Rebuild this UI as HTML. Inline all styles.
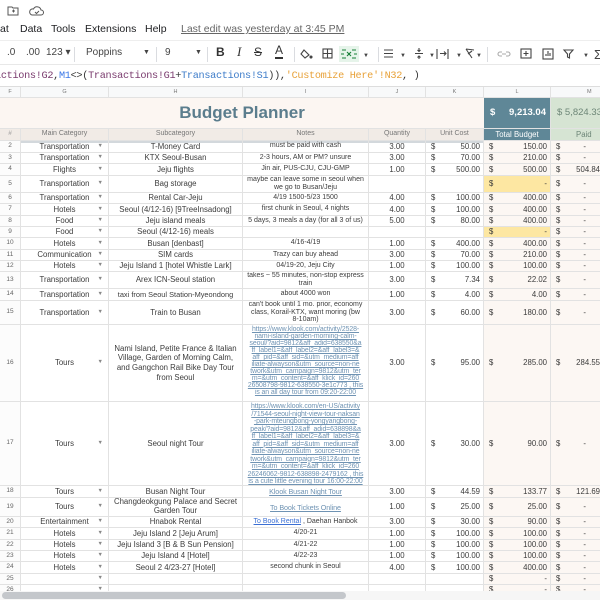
<!DOCTYPE html>
<html><head><meta charset="utf-8">
<style>
*{margin:0;padding:0}
body{width:600px;height:600px;overflow:hidden;position:relative;background:#fff;font-family:"Liberation Sans",sans-serif;color:#3c3c3c}
.abs{position:absolute;white-space:nowrap}
.menu{top:23px;font-size:10.5px;color:#202124}
.tb{top:47px;font-size:10px;color:#444}
.sep{position:absolute;top:47px;width:1px;height:15px;background:#dadce0}
.fx{top:71px;left:-5px;font-family:"Liberation Mono",monospace;font-size:10.2px;letter-spacing:-0.3px}
.r{position:absolute;left:0;width:660px;display:flex}
.c{box-sizing:border-box;border-right:1px solid #e2e2e2;border-bottom:1px solid #e2e2e2;height:100%;display:flex;align-items:center;justify-content:center;text-align:center;font-size:7.8px;color:#3c3c3c;overflow:hidden;position:relative;line-height:1.25;flex:none}
.n{width:21px;color:#666;font-size:6.5px;background:#fcfcfc}
.g{width:88px}.h{width:134px}.i{width:126px;font-size:7px}.j{width:57px}.k{width:58px}.l{width:67px;background:#fcf7f3}.m{width:90px;background:#fcf7f3}
.mo{justify-content:space-between;padding:0 3px 0 5px}
.m.mo{padding-right:54px}
.dd{position:absolute;right:5px;top:50%;margin-top:-4px;font-size:5.5px;color:#888}
.y{background:#fde7a2!important}
.lk{color:#6f93b3;text-decoration:underline;font-size:6.9px;line-height:7px;display:block;letter-spacing:-0.1px}
.hd .c{background:#f8f9fa;color:#777;font-size:5.5px}
</style></head><body>

<svg class="abs" style="left:6px;top:4px" width="40" height="14" viewBox="0 0 40 14">
<path d="M2 3h4l1 1h5v7H2z" fill="none" stroke="#555" stroke-width="1"/>
<path d="M6 7h3M7.5 5.5v3" stroke="#555" stroke-width="1"/>
<path d="M26 11h9a2.5 2.5 0 0 0 0-5 4 4 0 0 0-7.5-1A3 3 0 0 0 26 11z" fill="none" stroke="#555" stroke-width="1"/>
<path d="M29 8l1.5 1.5L33 7" fill="none" stroke="#555" stroke-width="1"/>
</svg>
<div class="abs menu" style="left:0">at</div>
<div class="abs menu" style="left:20px">Data</div>
<div class="abs menu" style="left:51px">Tools</div>
<div class="abs menu" style="left:85px">Extensions</div>
<div class="abs menu" style="left:145px">Help</div>
<div class="abs menu" style="left:181px;color:#666;text-decoration:underline">Last edit was yesterday at 3:45 PM</div>
<div class="abs" style="left:0;top:40px;width:600px;height:1px;background:#eee"></div>

<div class="abs tb" style="left:7px">.0</div>
<div class="abs tb" style="left:26px">.00</div>
<div class="abs tb" style="left:46px">123 ▾</div>
<div class="sep" style="left:74px"></div>
<div class="abs tb" style="left:86px">Poppins</div>
<div class="abs tb" style="left:143px;font-size:7px;top:49px">▼</div>
<div class="sep" style="left:156px"></div>
<div class="abs tb" style="left:165px">9</div>
<div class="abs tb" style="left:195px;font-size:7px;top:49px">▼</div>
<div class="sep" style="left:207px"></div>
<div class="abs tb" style="left:216px;font-weight:bold;font-size:12px;top:45px;color:#333">B</div>
<div class="abs tb" style="left:237px;font-style:italic;font-family:'Liberation Serif',serif;font-size:13px;top:44px;color:#333">I</div>
<div class="abs tb" style="left:254px;text-decoration:line-through;font-size:12px;top:45px;color:#333">S</div>
<div class="abs tb" style="left:275px;font-size:12px;top:44px;color:#333;border-bottom:2px solid #333;line-height:13px">A</div>
<div class="sep" style="left:294px"></div>
<svg class="abs" style="left:300px;top:46px" width="300" height="16" viewBox="0 0 300 16">
<g fill="none" stroke="#444" stroke-width="1.1">
<path d="M4 4l5 5-4 3-4-4z"/><circle cx="11" cy="11" r="1" fill="#444"/>
<rect x="23" y="3" width="9" height="9"/><path d="M27.5 3v9M23 7.5h9"/>
</g>
<rect x="39" y="0" width="20" height="16" fill="#e6f4ea"/>
<g fill="none" stroke="#188038" stroke-width="1.1"><path d="M42 4h4M52 4h4M42 12h4M52 12h4M44 8h-3M54 8h3M47 6l2 2-2 2M51 6l-2 2 2 2"/></g>
<text x="63" y="11" font-size="6" fill="#444">▼</text>
<g fill="none" stroke="#444" stroke-width="1.1">
<path d="M84 4h9M84 7.5h9M84 11h9"/>
<path d="M115 7.5h8M119 2v3M117.5 4l1.5 1.5 1.5-1.5M119 13v-3M117.5 11.5l1.5-1.5 1.5 1.5"/>
<path d="M137 3v10M140 7.5h6M144 5.5l2 2-2 2M148 3v10"/>
<path d="M166 3l6 9M166 3l8 1M168 8l4-3"/>
<path d="M202 6h-2a2 2 0 0 0 0 4h2M206 6h2a2 2 0 0 1 0 4h-2M202 8h4" stroke="#aaa"/>
<rect x="221" y="3" width="10" height="9"/><path d="M226 5v5M223.5 7.5h5"/>
<rect x="243" y="3" width="10" height="10"/><path d="M246 10v-2M248 10v-5M250 10v-3"/>
<path d="M264 4h9l-3.5 4v4l-2-1v-3z"/>
</g>
<text x="100" y="11" font-size="6" fill="#444">▼</text>
<text x="129" y="11" font-size="6" fill="#444">▼</text>
<text x="156" y="11" font-size="6" fill="#444">▼</text>
<text x="176" y="11" font-size="6" fill="#444">▼</text>
<text x="283" y="11" font-size="6" fill="#444">▼</text>
<text x="294" y="13" font-size="13" fill="#444">Σ</text>
</svg>
<div class="sep" style="left:378px"></div>
<div class="sep" style="left:487px"></div>
<div class="abs" style="left:0;top:64px;width:600px;height:1px;background:#e8e8e8"></div>

<div class="abs fx"><span style="color:#7a3b6e">actions!G2</span><span style="color:#333">,</span><span style="color:#3b78e7">M1</span><span style="color:#333">&lt;&gt;(</span><span style="color:#7a3b6e">Transactions!G1</span><span style="color:#333">+</span><span style="color:#3d7cc9">Transactions!S1</span><span style="color:#333">)),</span><span style="color:#e8a23a">'Customize Here'!N32</span><span style="color:#333">, )</span></div>
<div class="abs" style="left:0;top:86px;width:600px;height:1px;background:#ddd"></div>

<div class="r hd" style="top:87px;height:11px">
<div class="c n" style="background:#f8f9fa">F</div><div class="c g">G</div><div class="c h">H</div><div class="c i" style="font-size:5.5px">I</div><div class="c j">J</div><div class="c k">K</div><div class="c l" style="background:#f8f9fa">L</div><div class="c m" style="background:#f8f9fa;justify-content:flex-start;padding-left:36px">M</div>
</div>

<div class="r" style="top:98px;height:31px">
<div class="c" style="width:484px;background:#fcf6f2;font-size:17px;font-weight:bold;color:#5b7d8d;border-right:none">Budget Planner</div>
<div class="c mo" style="width:67px;background:#5f8797;color:#fff;font-size:9.5px;font-weight:bold;padding:0 4px 0 6px">$<span>9,213.04</span></div>
<div class="c" style="width:90px;background:#d6e4d3;color:#6d8677;font-size:9.5px;justify-content:flex-start;padding-left:6px">$ 5,824.33</div>
</div>
<div class="r" style="top:129px;height:12px;border-bottom:2px solid #d3d8dc">
<div class="c n" style="background:#f1ebe6;color:#999">#</div>
<div class="c g" style="background:#f1ebe6;color:#777;font-size:7px">Main Category</div>
<div class="c h" style="background:#f1ebe6;color:#777;font-size:7px">Subcategory</div>
<div class="c i" style="background:#f1ebe6;color:#777;font-size:7px">Notes</div>
<div class="c j" style="background:#f1ebe6;color:#777;font-size:7px">Quantity</div>
<div class="c k" style="background:#f1ebe6;color:#777;font-size:7px">Unit Cost</div>
<div class="c l" style="background:#5f8797;color:#fff;font-size:7.8px">Total Budget</div>
<div class="c m" style="background:#d6e4d3;color:#6d8677;font-size:7.8px;justify-content:flex-start;padding-left:25px">Paid</div>
</div>

<div id="rows">
<div class="r" style="top:141px;height:12px"><div class="c n">2</div><div class="c g">Transportation<span class="dd">▼</span></div><div class="c h">T-Money Card</div><div class="c i">must be paid with cash</div><div class="c j">3.00</div><div class="c k mo">$<span>50.00</span></div><div class="c l mo">$<span>150.00</span></div><div class="c m mo">$<span>-</span></div></div>
<div class="r" style="top:153px;height:11px"><div class="c n">3</div><div class="c g">Transportation<span class="dd">▼</span></div><div class="c h">KTX Seoul-Busan</div><div class="c i">2-3 hours, AM or PM? unsure</div><div class="c j">3.00</div><div class="c k mo">$<span>70.00</span></div><div class="c l mo">$<span>210.00</span></div><div class="c m mo">$<span>-</span></div></div>
<div class="r" style="top:164px;height:12px"><div class="c n">4</div><div class="c g">Flights<span class="dd">▼</span></div><div class="c h">Jeju flights</div><div class="c i">Jin air, PUS-CJU, CJU-GMP</div><div class="c j">1.00</div><div class="c k mo">$<span>500.00</span></div><div class="c l mo">$<span>500.00</span></div><div class="c m mo" style="padding-right:40px">$<span>504.84</span></div></div>
<div class="r" style="top:176px;height:17px"><div class="c n">5</div><div class="c g">Transportation<span class="dd">▼</span></div><div class="c h">Bag storage</div><div class="c i" style="line-height:1.1">maybe can leave some in seoul when<br>we go to Busan/Jeju</div><div class="c j"></div><div class="c k"></div><div class="c l mo y">$<span>-</span></div><div class="c m mo">$<span>-</span></div></div>
<div class="r" style="top:193px;height:11px"><div class="c n">6</div><div class="c g">Transportation<span class="dd">▼</span></div><div class="c h">Rental Car-Jeju</div><div class="c i">4/19 1500-5/23 1500</div><div class="c j">4.00</div><div class="c k mo">$<span>100.00</span></div><div class="c l mo">$<span>400.00</span></div><div class="c m mo">$<span>-</span></div></div>
<div class="r" style="top:204px;height:12px"><div class="c n">7</div><div class="c g">Hotels<span class="dd">▼</span></div><div class="c h">Seoul (4/12-16) [9TreeInsadong]</div><div class="c i">first chunk in Seoul, 4 nights</div><div class="c j">4.00</div><div class="c k mo">$<span>100.00</span></div><div class="c l mo">$<span>400.00</span></div><div class="c m mo">$<span>-</span></div></div>
<div class="r" style="top:216px;height:11px"><div class="c n">8</div><div class="c g">Food<span class="dd">▼</span></div><div class="c h">Jeju island meals</div><div class="c i">5 days, 3 meals a day (for all 3 of us)</div><div class="c j">5.00</div><div class="c k mo">$<span>80.00</span></div><div class="c l mo">$<span>400.00</span></div><div class="c m mo">$<span>-</span></div></div>
<div class="r" style="top:227px;height:11px"><div class="c n">9</div><div class="c g">Food<span class="dd">▼</span></div><div class="c h">Seoul (4/12-16) meals</div><div class="c i"></div><div class="c j"></div><div class="c k"></div><div class="c l mo y">$<span>-</span></div><div class="c m mo">$<span>-</span></div></div>
<div class="r" style="top:238px;height:12px"><div class="c n">10</div><div class="c g">Hotels<span class="dd">▼</span></div><div class="c h">Busan [denbast]</div><div class="c i">4/16-4/19</div><div class="c j">1.00</div><div class="c k mo">$<span>400.00</span></div><div class="c l mo">$<span>400.00</span></div><div class="c m mo">$<span>-</span></div></div>
<div class="r" style="top:250px;height:11px"><div class="c n">11</div><div class="c g">Communication<span class="dd">▼</span></div><div class="c h">SIM cards</div><div class="c i">Trazy can buy ahead</div><div class="c j">3.00</div><div class="c k mo">$<span>70.00</span></div><div class="c l mo">$<span>210.00</span></div><div class="c m mo">$<span>-</span></div></div>
<div class="r" style="top:261px;height:11px"><div class="c n">12</div><div class="c g">Hotels<span class="dd">▼</span></div><div class="c h">Jeju Island 1 [hotel Whistle Lark]</div><div class="c i">04/19-20, Jeju City</div><div class="c j">1.00</div><div class="c k mo">$<span>100.00</span></div><div class="c l mo">$<span>100.00</span></div><div class="c m mo">$<span>-</span></div></div>
<div class="r" style="top:272px;height:17px"><div class="c n">13</div><div class="c g">Transportation<span class="dd">▼</span></div><div class="c h">Arex ICN-Seoul station</div><div class="c i" style="line-height:1.1">takes ~ 55 minutes, non-stop express<br>train</div><div class="c j">3.00</div><div class="c k mo">$<span>7.34</span></div><div class="c l mo">$<span>22.02</span></div><div class="c m mo">$<span>-</span></div></div>
<div class="r" style="top:289px;height:12px"><div class="c n">14</div><div class="c g">Transportation<span class="dd">▼</span></div><div class="c h" style="font-size:7.4px">taxi from Seoul Station-Myeondong</div><div class="c i">about 4000 won</div><div class="c j">1.00</div><div class="c k mo">$<span>4.00</span></div><div class="c l mo">$<span>4.00</span></div><div class="c m mo">$<span>-</span></div></div>
<div class="r" style="top:301px;height:24px"><div class="c n">15</div><div class="c g">Transportation<span class="dd">▼</span></div><div class="c h">Train to Busan</div><div class="c i" style="line-height:1.1">can't book until 1 mo. prior, economy<br>class, Korail-KTX, want moring (bw<br>8-10am)</div><div class="c j">3.00</div><div class="c k mo">$<span>60.00</span></div><div class="c l mo">$<span>180.00</span></div><div class="c m mo">$<span>-</span></div></div>
<div class="r" style="top:325px;height:77px"><div class="c n">16</div><div class="c g">Tours<span class="dd">▼</span></div><div class="c h">Nami Island, Petite France &amp; Italian<br>Village, Garden of Morning Calm,<br>and Gangchon Rail Bike Day Tour<br>from Seoul</div><div class="c i" style="display:block;padding-top:1px"><span class="lk">https://www.klook.com/activity/2528-<br>nami-island-garden-morning-calm-<br>seoul/?aid=9812&amp;aff_adid=638550&amp;a<br>ff_label1=&amp;aff_label2=&amp;aff_label3=&amp;<br>aff_pid=&amp;aff_sid=&amp;utm_medium=aff<br>iliate-alwayson&amp;utm_source=non-ne<br>twork&amp;utm_campaign=9812&amp;utm_ter<br>m=&amp;utm_content=&amp;aff_klick_id=260<br>26508798-9812-638550-3e1c773 , this<br>is an all day tour from 09:20-22:00</span></div><div class="c j">3.00</div><div class="c k mo">$<span>95.00</span></div><div class="c l mo">$<span>285.00</span></div><div class="c m mo" style="padding-right:40px">$<span>284.55</span></div></div>
<div class="r" style="top:402px;height:84px"><div class="c n">17</div><div class="c g">Tours<span class="dd">▼</span></div><div class="c h">Seoul night Tour</div><div class="c i" style="display:block;padding-top:1px"><span class="lk" style="line-height:7.5px">https://www.klook.com/en-US/activity<br>/71544-seoul-night-view-tour-naksan<br>-park-mteungbong-yongyangbong-<br>peak/?aid=9812&amp;aff_adid=638898&amp;a<br>ff_label1=&amp;aff_label2=&amp;aff_label3=&amp;<br>aff_pid=&amp;aff_sid=&amp;utm_medium=aff<br>iliate-alwayson&amp;utm_source=non-ne<br>twork&amp;utm_campaign=9812&amp;utm_ter<br>m=&amp;utm_content=&amp;aff_klick_id=260<br>26246062-9812-638898-2479162 , this<br>is a cute little evening tour 16:00-22:00</span></div><div class="c j">3.00</div><div class="c k mo">$<span>30.00</span></div><div class="c l mo">$<span>90.00</span></div><div class="c m mo">$<span>-</span></div></div>
<div class="r" style="top:486px;height:12px"><div class="c n">18</div><div class="c g">Tours<span class="dd">▼</span></div><div class="c h">Busan Night Tour</div><div class="c i"><span class="lk" style="font-size:7.2px">Klook Busan Night Tour</span></div><div class="c j">3.00</div><div class="c k mo">$<span>44.59</span></div><div class="c l mo">$<span>133.77</span></div><div class="c m mo" style="padding-right:40px">$<span>121.69</span></div></div>
<div class="r" style="top:498px;height:19px"><div class="c n">19</div><div class="c g">Tours<span class="dd">▼</span></div><div class="c h" style="line-height:1.1">Changdeokgung Palace and Secret<br>Garden Tour</div><div class="c i"><span class="lk" style="font-size:7.2px">To Book Tickets Online</span></div><div class="c j">1.00</div><div class="c k mo">$<span>25.00</span></div><div class="c l mo">$<span>25.00</span></div><div class="c m mo">$<span>-</span></div></div>
<div class="r" style="top:517px;height:11px"><div class="c n">20</div><div class="c g">Entertainment<span class="dd">▼</span></div><div class="c h">Hnabok Rental</div><div class="c i"><span style="color:#3b6fd4;text-decoration:underline">To Book Rental</span>&nbsp;, Daehan Hanbok</div><div class="c j">3.00</div><div class="c k mo">$<span>30.00</span></div><div class="c l mo">$<span>90.00</span></div><div class="c m mo">$<span>-</span></div></div>
<div class="r" style="top:528px;height:12px"><div class="c n">21</div><div class="c g">Hotels<span class="dd">▼</span></div><div class="c h">Jeju Island 2 [Jeju Arum]</div><div class="c i">4/20-21</div><div class="c j">1.00</div><div class="c k mo">$<span>100.00</span></div><div class="c l mo">$<span>100.00</span></div><div class="c m mo">$<span>-</span></div></div>
<div class="r" style="top:540px;height:11px"><div class="c n">22</div><div class="c g">Hotels<span class="dd">▼</span></div><div class="c h">Jeju Island 3 [B &amp; B Sun Pension]</div><div class="c i">4/21-22</div><div class="c j">1.00</div><div class="c k mo">$<span>100.00</span></div><div class="c l mo">$<span>100.00</span></div><div class="c m mo">$<span>-</span></div></div>
<div class="r" style="top:551px;height:11px"><div class="c n">23</div><div class="c g">Hotels<span class="dd">▼</span></div><div class="c h">Jeju Island 4 [Hotel]</div><div class="c i">4/22-23</div><div class="c j">1.00</div><div class="c k mo">$<span>100.00</span></div><div class="c l mo">$<span>100.00</span></div><div class="c m mo">$<span>-</span></div></div>
<div class="r" style="top:562px;height:12px"><div class="c n">24</div><div class="c g">Hotels<span class="dd">▼</span></div><div class="c h">Seoul 2 4/23-27 [Hotel]</div><div class="c i">second chunk in Seoul</div><div class="c j">4.00</div><div class="c k mo">$<span>100.00</span></div><div class="c l mo">$<span>400.00</span></div><div class="c m mo">$<span>-</span></div></div>
<div class="r" style="top:574px;height:11px"><div class="c n">25</div><div class="c g"><span class="dd">▼</span></div><div class="c h"></div><div class="c i"></div><div class="c j"></div><div class="c k"></div><div class="c l mo">$<span>-</span></div><div class="c m mo">$<span>-</span></div></div>
<div class="r" style="top:585px;height:11px"><div class="c n">26</div><div class="c g"><span class="dd">▼</span></div><div class="c h"></div><div class="c i"></div><div class="c j"></div><div class="c k"></div><div class="c l mo">$<span>-</span></div><div class="c m mo">$<span>-</span></div></div>
</div>

<div class="abs" style="left:0;top:591px;width:600px;height:9px;background:#f6f6f6"></div>
<div class="abs" style="left:2px;top:592px;width:344px;height:7px;border-radius:4px;background:#c4c7cb"></div>
</body></html>
